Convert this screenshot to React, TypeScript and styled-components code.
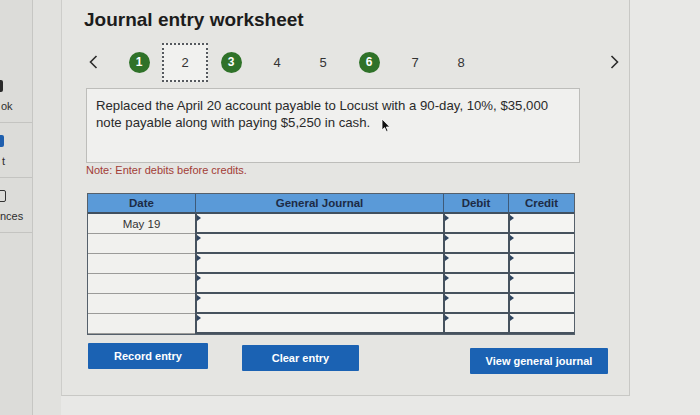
import styled, { createGlobalStyle } from "styled-components";

const GlobalStyle = createGlobalStyle`
  html, body {
    margin: 0;
    padding: 0;
    background: #e8e8e6;
    font-family: "Liberation Sans", Arial, sans-serif;
  }
`;

const Screen = styled.div`
  display: flex;
  width: 700px;
  height: 415px;
  overflow: hidden;
  background: #e8e8e6;
`;

const Sidebar = styled.div`
  width: 32px;
  flex-shrink: 0;
  background: #dcdcd9;
  border-right: 1px solid #c6c6c3;
  padding-top: 68px;
  display: flex;
  flex-direction: column;
  align-self: stretch;
`;

const SideItem = styled.div`
  height: 55px;
  border-bottom: 1px solid #c4c4c1;
  overflow: hidden;
  display: flex;
  flex-direction: column;
  align-items: flex-start;
  padding-top: 12px;
  gap: 8px;
  box-sizing: border-box;
`;

const SideIcon = styled.div<{ $color: string; $outline?: boolean; $cut: number }>`
  width: 14px;
  height: 12px;
  flex-shrink: 0;
  margin-left: ${(p) => -p.$cut}px;
  border-radius: 2px;
  box-sizing: border-box;
  background: ${(p) => (p.$outline ? "transparent" : p.$color)};
  border: ${(p) => (p.$outline ? `1.5px solid ${p.$color}` : "none")};
`;

const SideLabel = styled.span<{ $left: number }>`
  padding-left: ${(p) => p.$left}px;
  font-size: 11px;
  line-height: 12px;
  color: #2e2e2e;
`;

const Gutter = styled.div`
  width: 28px;
  flex-shrink: 0;
  background: #e1e1de;
`;

const Panel = styled.div`
  width: 569px;
  height: 396px;
  flex-shrink: 0;
  background: #e5e5e2;
  border-left: 1px solid #cdcdca;
  border-right: 1px solid #c8c8c5;
  border-bottom: 1px solid #c8c8c5;
  padding-left: 22px;
  box-sizing: border-box;
  display: flex;
  flex-direction: column;
`;

const Title = styled.h1`
  margin: 9px 0 0 0;
  font-size: 19px;
  font-weight: bold;
  color: #1c1c1c;
  line-height: 22px;
`;

const NavRow = styled.div`
  display: flex;
  align-items: center;
  height: 40px;
  margin-top: 11px;
`;

const Chevron = styled.div`
  width: 14px;
  display: flex;
  justify-content: center;
  margin-left: 2px;
  color: #333;
`;

const Steps = styled.div`
  display: flex;
  margin-left: 16px;
`;

const Step = styled.div`
  width: 46px;
  height: 40px;
  display: flex;
  align-items: center;
  justify-content: center;
  font-size: 13px;
  color: #333;
`;

const DoneDot = styled.div`
  width: 21px;
  height: 21px;
  border-radius: 50%;
  background: #2f7229;
  color: #fff;
  font-weight: bold;
  font-size: 12px;
  display: flex;
  align-items: center;
  justify-content: center;
`;

const CurrentBox = styled.div`
  width: 47px;
  height: 39px;
  border: 2px dotted #55595e;
  background: #f1f1ef;
  display: flex;
  align-items: center;
  justify-content: center;
  box-sizing: border-box;
`;

const NextChevron = styled(Chevron)`
  margin-left: auto;
  margin-right: 8px;
`;

const Prompt = styled.div`
  position: relative;
  width: 494px;
  height: 75px;
  margin: 6px 0 0 2px;
  box-sizing: border-box;
  background: #f0f0ee;
  border: 1px solid #bdbdba;
  padding: 8px 9px;
  font-size: 13.2px;
  line-height: 17px;
  color: #2a2a2a;
`;

const Cursor = styled.svg`
  position: absolute;
  left: 294px;
  top: 29px;
`;

const Note = styled.div`
  margin: 1px 0 0 2px;
  font-size: 11px;
  line-height: 12px;
  color: #a23c36;
`;

const Table = styled.div`
  margin: 17px 0 0 3px;
  width: 486px;
  border: 1px solid #55606b;
  display: grid;
  grid-template-columns: 107px 248px 65px 66px;
`;

const HeadCell = styled.div`
  height: 20px;
  background: #5a9ad8;
  border-left: 1px solid #3e5a78;
  border-bottom: 2px solid #41505f;
  box-sizing: border-box;
  display: flex;
  align-items: center;
  justify-content: center;
  font-size: 11.5px;
  font-weight: bold;
  color: #1d2b45;
  &:first-child {
    border-left: none;
  }
`;

const DateCell = styled.div`
  height: 20px;
  background: #f1f1ee;
  border-bottom: 1px solid #9b9b99;
  box-sizing: border-box;
  display: flex;
  align-items: center;
  justify-content: center;
  font-size: 11.5px;
  color: #333;
`;

const InputCell = styled.div`
  position: relative;
  height: 20px;
  background: #f4f4f2;
  border-left: 2px solid #46525e;
  border-bottom: 2px solid #46525e;
  box-sizing: border-box;
  &::before {
    content: "";
    position: absolute;
    left: 0;
    top: 1px;
    border-top: 3px solid transparent;
    border-bottom: 3px solid transparent;
    border-left: 4px solid #2f4560;
  }
`;

const ButtonRow = styled.div`
  display: flex;
  align-items: flex-start;
  width: 520px;
  margin: 8px 0 0 4px;
  gap: 34px;
`;

const ActionButton = styled.button<{ $w: number; $drop?: number }>`
  width: ${(p) => p.$w}px;
  height: 26px;
  margin-top: ${(p) => p.$drop ?? 0}px;
  border: none;
  border-radius: 1px;
  background: #1b62b3;
  color: #fff;
  font-family: "Liberation Sans", Arial, sans-serif;
  font-size: 11px;
  font-weight: bold;
  cursor: pointer;
  &:last-child {
    margin-left: auto;
  }
`;

const ChevronIcon = ({ dir }: { dir: "left" | "right" }) => (
  <svg width="9" height="14" viewBox="0 0 9 14">
    <path
      d={dir === "left" ? "M7.5 1 L1.5 7 L7.5 13" : "M1.5 1 L7.5 7 L1.5 13"}
      fill="none"
      stroke="#2b2b2b"
      strokeWidth="1.6"
    />
  </svg>
);

const steps: { n: number; state: "done" | "current" | "todo" }[] = [
  { n: 1, state: "done" },
  { n: 2, state: "current" },
  { n: 3, state: "done" },
  { n: 4, state: "todo" },
  { n: 5, state: "todo" },
  { n: 6, state: "done" },
  { n: 7, state: "todo" },
  { n: 8, state: "todo" },
];

const rows = ["May 19", "", "", "", "", ""];

export default function App() {
  return (
    <>
      <GlobalStyle />
      <Screen>
        <Sidebar>
          <SideItem>
            <SideIcon $color="#2a2a2a" $cut={11} />
            <SideLabel $left={1}>ok</SideLabel>
          </SideItem>
          <SideItem>
            <SideIcon $color="#1f5fae" $cut={10} />
            <SideLabel $left={2}>t</SideLabel>
          </SideItem>
          <SideItem>
            <SideIcon $color="#333" $outline $cut={8} />
            <SideLabel $left={0}>nces</SideLabel>
          </SideItem>
        </Sidebar>
        <Gutter />
        <Panel>
          <Title>Journal entry worksheet</Title>
          <NavRow>
            <Chevron>
              <ChevronIcon dir="left" />
            </Chevron>
            <Steps>
              {steps.map((s) => (
                <Step key={s.n}>
                  {s.state === "done" && <DoneDot>{s.n}</DoneDot>}
                  {s.state === "current" && <CurrentBox>{s.n}</CurrentBox>}
                  {s.state === "todo" && s.n}
                </Step>
              ))}
            </Steps>
            <NextChevron>
              <ChevronIcon dir="right" />
            </NextChevron>
          </NavRow>
          <Prompt>
            Replaced the April 20 account payable to Locust with a 90-day, 10%, $35,000
            <br />
            note payable along with paying $5,250 in cash.
            <Cursor width="10" height="15" viewBox="0 0 10 15">
              <path
                d="M1 1 L1 12 L3.6 9.6 L5.4 13.6 L7 12.9 L5.3 9 L8.8 9 Z"
                fill="#111"
                stroke="#fff"
                strokeWidth="0.8"
              />
            </Cursor>
          </Prompt>
          <Note>Note: Enter debits before credits.</Note>
          <Table>
            <HeadCell>Date</HeadCell>
            <HeadCell>General Journal</HeadCell>
            <HeadCell>Debit</HeadCell>
            <HeadCell>Credit</HeadCell>
            {rows.map((d, i) => (
              <>
                <DateCell key={`d${i}`}>{d}</DateCell>
                <InputCell key={`g${i}`} />
                <InputCell key={`b${i}`} />
                <InputCell key={`c${i}`} />
              </>
            ))}
          </Table>
          <ButtonRow>
            <ActionButton $w={120}>Record entry</ActionButton>
            <ActionButton $w={117} $drop={2}>Clear entry</ActionButton>
            <ActionButton $w={138} $drop={5}>View general journal</ActionButton>
          </ButtonRow>
        </Panel>
      </Screen>
    </>
  );
}
